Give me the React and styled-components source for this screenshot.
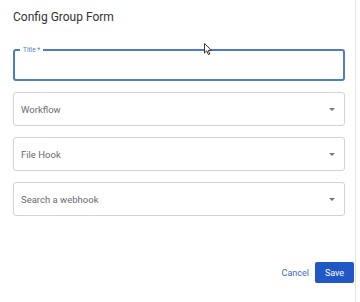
import React from "react";
import styled, { createGlobalStyle } from "styled-components";

const Global = createGlobalStyle`
  html, body { margin: 0; padding: 0; background: #fff; }
  body { font-family: Roboto, "Liberation Sans", Arial, sans-serif; }
  * { box-sizing: border-box; }
`;

const Dialog = styled.div`
  position: relative;
  width: 356px;
  height: 302px;
  border-right: 1px solid #e4e4e4;
  display: flex;
  flex-direction: column;
  padding: 9px 1px 0 13px;
`;

const Heading = styled.h2`
  margin: 0;
  font-size: 12px;
  line-height: 16px;
  font-weight: 400;
  color: #333;
`;

const Fields = styled.div`
  margin-top: 24px;
  display: flex;
  flex-direction: column;
  gap: 11px;
  width: 332px;
`;

const Outlined = styled.div`
  position: relative;
  height: ${(p) => (p.$focused ? 32 : 34)}px;
  border: ${(p) => (p.$focused ? "2px solid #4f7dc3" : "1px solid #d3d3d3")};
  border-radius: 3px;
  display: flex;
  align-items: center;
  padding: 0 9px 0 7px;
`;

const Legend = styled.span`
  position: absolute;
  left: 5px;
  top: -5px;
  padding: 0 3px;
  background: #fff;
  font-size: 6.5px;
  line-height: 8px;
  color: #4f7dc3;
`;

const Placeholder = styled.span`
  flex: 1;
  font-size: 9.5px;
  color: #6b6b6b;
`;

const Caret = styled.span`
  width: 0;
  height: 0;
  border-left: 3px solid transparent;
  border-right: 3px solid transparent;
  border-top: 3px solid #777;
`;

const Actions = styled.div`
  margin-top: auto;
  margin-bottom: 19px;
  display: flex;
  justify-content: flex-end;
  align-items: center;
  gap: 6px;
`;

const TextButton = styled.button`
  border: none;
  background: none;
  padding: 0;
  font-family: inherit;
  font-size: 9px;
  color: #3b6cc8;
`;

const PrimaryButton = styled.button`
  width: 39px;
  height: 21px;
  border: none;
  border-radius: 2px;
  background: #2158c5;
  color: #fff;
  font-family: inherit;
  font-size: 9px;
  padding: 0;
`;

const Cursor = styled.svg`
  position: absolute;
  left: 204px;
  top: 43px;
`;

const SelectField = ({ label }) => (
  <Outlined>
    <Placeholder>{label}</Placeholder>
    <Caret />
  </Outlined>
);

export default function App() {
  return (
    <>
      <Global />
      <Dialog>
        <Heading>Config Group Form</Heading>
        <Fields>
          <Outlined $focused>
            <Legend>Title *</Legend>
          </Outlined>
          <SelectField label="Workflow" />
          <SelectField label="File Hook" />
          <SelectField label="Search a webhook" />
        </Fields>
        <Actions>
          <TextButton>Cancel</TextButton>
          <PrimaryButton>Save</PrimaryButton>
        </Actions>
        <Cursor width="9" height="13" viewBox="0 0 9 13">
          <path d="M0.5 0.5 L0.5 10 L2.8 7.8 L4.4 11.6 L5.8 11 L4.3 7.3 L7.5 7.3 Z" fill="#fff" stroke="#222" strokeWidth="0.9" />
        </Cursor>
      </Dialog>
    </>
  );
}
